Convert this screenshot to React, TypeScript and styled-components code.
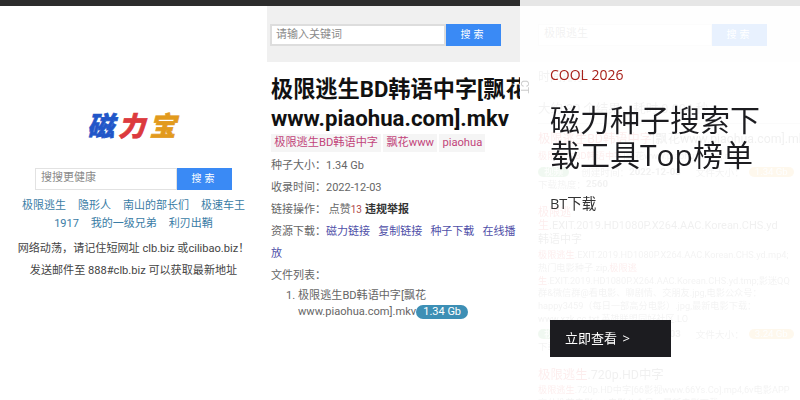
import React from 'react';
import styled, { createGlobalStyle } from 'styled-components';

const GlobalStyle = createGlobalStyle`
    html, body {
        margin: 0;
        padding: 0;
        background: #fff;
    }
    body {
        font-family: Roboto, "Noto Sans CJK SC", sans-serif;
    }
`;

const Page = styled.div`
    width: 800px;
    height: 400px;
    display: grid;
    grid-template-columns: 267px 253px 280px;
    overflow: hidden;
`;

const Panel = styled.section`
    position: relative;
    height: 400px;
    overflow: hidden;
    background: #fff;
`;

const TopBar = styled.div`
    height: 6px;
    background: #2c2c2c;
`;

const HomeBody = styled.div`
    display: flex;
    flex-direction: column;
    align-items: center;
    padding-top: 101px;
`;

const Logo = styled.div`
    font-family: "Noto Sans CJK SC", sans-serif;
    font-size: 27px;
    line-height: 36px;
    font-weight: 900;
    font-style: italic;
    display: flex;
    gap: 4px;
    margin-right: 4px;
    -webkit-text-stroke: 0.6px currentColor;
`;

const LogoChar = styled.span<{ $color: string }>`
    color: ${({ $color }) => $color};
`;

const SearchForm = styled.div<{ $width: number; $top?: number }>`
    display: flex;
    width: ${({ $width }) => $width}px;
    height: 22px;
    margin-top: ${({ $top }) => $top ?? 0}px;
`;

const SearchInput = styled.div<{ $thick?: boolean }>`
    flex: 1;
    box-sizing: border-box;
    border: ${({ $thick }) => ($thick ? '2px solid #ddd' : '1px solid #e2e2e2')};
    background: #fff;
    color: #8a8a8a;
    font-size: 11px;
    line-height: 18px;
    padding-left: ${({ $thick }) => ($thick ? 4 : 5)}px;
`;

const SearchButton = styled.div`
    width: 55px;
    background: #3a8af5;
    color: #fff;
    font-size: 10px;
    line-height: 22px;
    text-align: center;
    letter-spacing: 3px;
`;

const HotLinks = styled.div`
    width: 240px;
    margin-top: 7px;
    display: flex;
    flex-wrap: wrap;
    justify-content: center;
    column-gap: 12px;
    font-size: 11px;
    line-height: 18px;
    color: #3a7ca5;
`;

const Notice = styled.p`
    margin: 8px 0 0;
    font-size: 11.1px;
    line-height: 16px;
    color: #444;
    white-space: nowrap;
    & + & {
        margin-top: 6px;
    }
`;

const SearchStrip = styled.div<{ $faded?: boolean }>`
    height: 56px;
    box-sizing: border-box;
    padding: 18px 0 0 ${({ $faded }) => ($faded ? 18 : 3)}px;
    background: #f0f0f0;
`;

const Detail = styled.div`
    padding: 13px 4px 0;
`;

const Title = styled.h1`
    margin: 0;
    font-size: 22.2px;
    line-height: 29px;
    font-weight: 700;
    color: #111;
    white-space: nowrap;
`;

const Tags = styled.div`
    display: flex;
    gap: 2px;
    margin-top: 1px;
`;

const Tag = styled.span`
    background: #f5f5f5;
    color: #c2447a;
    font-size: 11.2px;
    line-height: 18px;
    padding: 0 3.2px;
`;

const InfoRow = styled.div`
    margin-top: 3px;
    font-size: 11px;
    line-height: 22px;
    color: #666;
    white-space: nowrap;
    & + & {
        margin-top: 0;
    }
`;

const Strong = styled.b`
    color: #333;
    margin-left: 3px;
`;

const Count = styled.span`
    color: #b04a4a;
    font-size: 10px;
`;

const Action = styled.span`
    color: #4f4fa8;
    margin-right: 8.2px;
`;

const FileList = styled.ol`
    margin: 1px 0 0;
    padding: 0 0 0 27px;
    font-size: 11.1px;
    line-height: 16px;
    color: #666;
`;

const SizePill = styled.span`
    display: inline-block;
    background: #3d8fb5;
    color: #fff;
    border-radius: 7px;
    height: 14px;
    line-height: 14px;
    padding: 0 7px;
    font-size: 11px;
`;

const Faded = styled.div`
    opacity: 0.12;
    filter: blur(0.6px);
`;

const SideTab = styled.span`
    position: absolute;
    left: -1px;
    top: 80px;
    writing-mode: vertical-rl;
    font-size: 11px;
    line-height: 10px;
    color: #ccc;
`;

const ResultList = styled.div`
    padding: 0 0 0 18px;
    font-size: 11px;
    color: #666;
    opacity: 0.65;
`;

const Crumb = styled.div`
    padding-top: 6px;
    font-size: 12px;
    line-height: 18px;
`;

const ResultMeta = styled.div`
    margin-top: 14px;
    padding-bottom: 5px;
    border-bottom: 1px solid #ccc;
    font-size: 12.5px;
    line-height: 18px;
`;

const Result = styled.article<{ $gap: number }>`
    padding-top: ${({ $gap }) => $gap}px;
`;

const ResultTitle = styled.div<{ $size: number }>`
    font-size: ${({ $size }) => $size}px;
    line-height: 13.5px;
    color: #444;
    white-space: nowrap;
`;

const ResultText = styled.div`
    margin-top: 3px;
    font-size: 9.2px;
    line-height: 12.7px;
    white-space: nowrap;
`;

const Hit = styled.em`
    font-style: normal;
    color: #e02020;
`;

const MetaLine = styled.div<{ $top: number }>`
    margin-top: ${({ $top }) => $top}px;
    display: flex;
    align-items: center;
    height: 12px;
    font-size: 9.6px;
    white-space: nowrap;
`;

const MetaValue = styled.b`
    color: #555;
    margin-right: 15px;
`;

const Badge = styled.span<{ $tone: 'green' | 'orange' }>`
    display: inline-block;
    background: ${({ $tone }) => ($tone === 'green' ? '#4caf50' : '#f5a623')};
    color: #fff;
    border-radius: 5px;
    line-height: 10px;
    padding: 0 6px;
    margin: ${({ $tone }) => ($tone === 'green' ? '0 12px 0 0' : '0 0 0 5px')};
`;

const Promo = styled.div`
    position: absolute;
    inset: 6px 0 0 0;
    padding: 60px 0 0 30px;
    display: flex;
    flex-direction: column;
    align-items: flex-start;
`;

const Kicker = styled.div`
    font-family: "Open Sans", "Noto Sans CJK SC", sans-serif;
    font-size: 14px;
    line-height: 18px;
    color: #a8201a;
`;

const PromoTitle = styled.h2`
    margin: 18px 0 0;
    width: 215px;
    font-family: "Open Sans", "Noto Sans CJK SC", sans-serif;
    font-size: 30px;
    line-height: 35px;
    font-weight: 400;
    color: #1c1c20;
`;

const PromoSub = styled.div`
    margin-top: 22px;
    font-family: "Open Sans", "Noto Sans CJK SC", sans-serif;
    font-size: 14.5px;
    line-height: 20px;
    color: #333;
`;

const PromoButton = styled.div`
    margin-top: 106px;
    width: 121px;
    height: 37px;
    box-sizing: border-box;
    padding-left: 15px;
    background: #1c1c20;
    color: #fff;
    font-family: "Open Sans", "Noto Sans CJK SC", sans-serif;
    font-size: 13px;
    line-height: 37px;
    word-spacing: 2px;
`;

const App = () => {
    return (
        <Page>
            <GlobalStyle />
            <Panel>
                <TopBar />
                <HomeBody>
                    <Logo>
                        <LogoChar $color="#2156c8">磁</LogoChar>
                        <LogoChar $color="#dc3a3e">力</LogoChar>
                        <LogoChar $color="#e29a1c">宝</LogoChar>
                    </Logo>
                    <SearchForm $width={197} $top={25}>
                        <SearchInput>搜搜更健康</SearchInput>
                        <SearchButton>搜索</SearchButton>
                    </SearchForm>
                    <HotLinks>
                        <span>极限逃生</span>
                        <span>隐形人</span>
                        <span>南山的部长们</span>
                        <span>极速车王</span>
                        <span>1917</span>
                        <span>我的一级兄弟</span>
                        <span>利刃出鞘</span>
                    </HotLinks>
                    <Notice>网络动荡，请记住短网址 clb.biz 或cilibao.biz！</Notice>
                    <Notice>发送邮件至 888#clb.biz 可以获取最新地址</Notice>
                </HomeBody>
            </Panel>
            <Panel>
                <TopBar />
                <SearchStrip>
                    <SearchForm $width={231}>
                        <SearchInput $thick>请输入关键词</SearchInput>
                        <SearchButton>搜索</SearchButton>
                    </SearchForm>
                </SearchStrip>
                <Detail>
                    <Title>
                        极限逃生BD韩语中字[飘花
                        <br />
                        www.piaohua.com].mkv
                    </Title>
                    <Tags>
                        <Tag>极限逃生BD韩语中字</Tag>
                        <Tag>飘花www</Tag>
                        <Tag>piaohua</Tag>
                    </Tags>
                    <InfoRow>种子大小：1.34 Gb</InfoRow>
                    <InfoRow>收录时间：2022-12-03</InfoRow>
                    <InfoRow>
                        链接操作：&nbsp;点赞<Count>13</Count>
                        <Strong>违规举报</Strong>
                    </InfoRow>
                    <InfoRow>
                        资源下载：<Action>磁力链接</Action>
                        <Action>复制链接</Action>
                        <Action>种子下载</Action>
                        <Action>在线播</Action>
                    </InfoRow>
                    <InfoRow>
                        <Action>放</Action>
                    </InfoRow>
                    <InfoRow>文件列表：</InfoRow>
                    <FileList>
                        <li>
                            极限逃生BD韩语中字[飘花
                            <br />
                            www.piaohua.com].mkv<SizePill>1.34 Gb</SizePill>
                        </li>
                    </FileList>
                </Detail>
            </Panel>
            <Panel>
                <Faded>
                    <TopBar />
                    <SearchStrip $faded>
                        <SearchForm $width={229}>
                            <SearchInput>极限逃生</SearchInput>
                            <SearchButton>搜索</SearchButton>
                        </SearchForm>
                    </SearchStrip>
                    <ResultList>
                        <Crumb>时间排序</Crumb>
                        <ResultMeta>大约 30 个结果，耗时 0.004 秒</ResultMeta>
                        <Result $gap={9}>
                            <ResultTitle $size={12.3}>
                                <Hit>极限逃生BD韩语中字</Hit>[飘花www.piaohua.com].mkv
                            </ResultTitle>
                            <ResultText>
                                <Hit>极限逃生BD韩语中字</Hit>[飘花www.piaohua.com].mkv
                            </ResultText>
                            <MetaLine $top={3.6}>
                                <Badge $tone="green">视频</Badge>创建时间：
                                <MetaValue>2022-12-03</MetaValue>
                                文件大小：<Badge $tone="orange">1.34 Gb</Badge>
                            </MetaLine>
                            <MetaLine $top={0}>
                                下载热度：<MetaValue>2560</MetaValue>
                            </MetaLine>
                        </Result>
                        <Result $gap={16}>
                            <ResultTitle $size={11}>
                                <Hit>极限逃</Hit>
                                <br />
                                <Hit>生</Hit>.EXIT.2019.HD1080P.X264.AAC.Korean.CHS.yd
                                <br />
                                韩语中字
                            </ResultTitle>
                            <ResultText>
                                <Hit>极限逃生</Hit>.EXIT.2019.HD1080P.X264.AAC.Korean.CHS.yd.mp4;
                                <br />
                                热门电影种子.zip,<Hit>极限逃</Hit>
                                <br />
                                <Hit>生</Hit>.EXIT.2019.HD1080P.X264.AAC.Korean.CHS.yd.tmp;影迷QQ
                                <br />
                                群&amp;微信群@看电影、聊剧情、交朋友.jpg,电影公众号：
                                <br />
                                happy3459（每日一部高分电影）.jpg,最新电影下载：
                                <br />
                                www.xzk.cc.txt,英雄联盟同好社区.LO
                            </ResultText>
                            <MetaLine $top={2}>
                                <Badge $tone="green">视频</Badge>创建时间：
                                <MetaValue>2022-12-03</MetaValue>
                                文件大小：<Badge $tone="orange">3.24 Gb</Badge>
                            </MetaLine>
                            <MetaLine $top={0}>
                                下载热度：<MetaValue>1820</MetaValue>
                            </MetaLine>
                        </Result>
                        <Result $gap={16}>
                            <ResultTitle $size={12.4}>
                                <Hit>极限逃生</Hit>.720p.HD中字
                            </ResultTitle>
                            <ResultText>
                                <Hit>极限逃生</Hit>.720p.HD中字[66影视www.66Ys.Co].mp4,6v电影APP
                                <br />
                                高分推荐电影.txt,电影公众号：最新电影下载
                            </ResultText>
                        </Result>
                    </ResultList>
                </Faded>
                <SideTab>CT</SideTab>
                <Promo>
                    <Kicker>COOL 2026</Kicker>
                    <PromoTitle>磁力种子搜索下载工具Top榜单</PromoTitle>
                    <PromoSub>BT下载</PromoSub>
                    <PromoButton>立即查看 &gt;</PromoButton>
                </Promo>
            </Panel>
        </Page>
    );
};

export default App;
